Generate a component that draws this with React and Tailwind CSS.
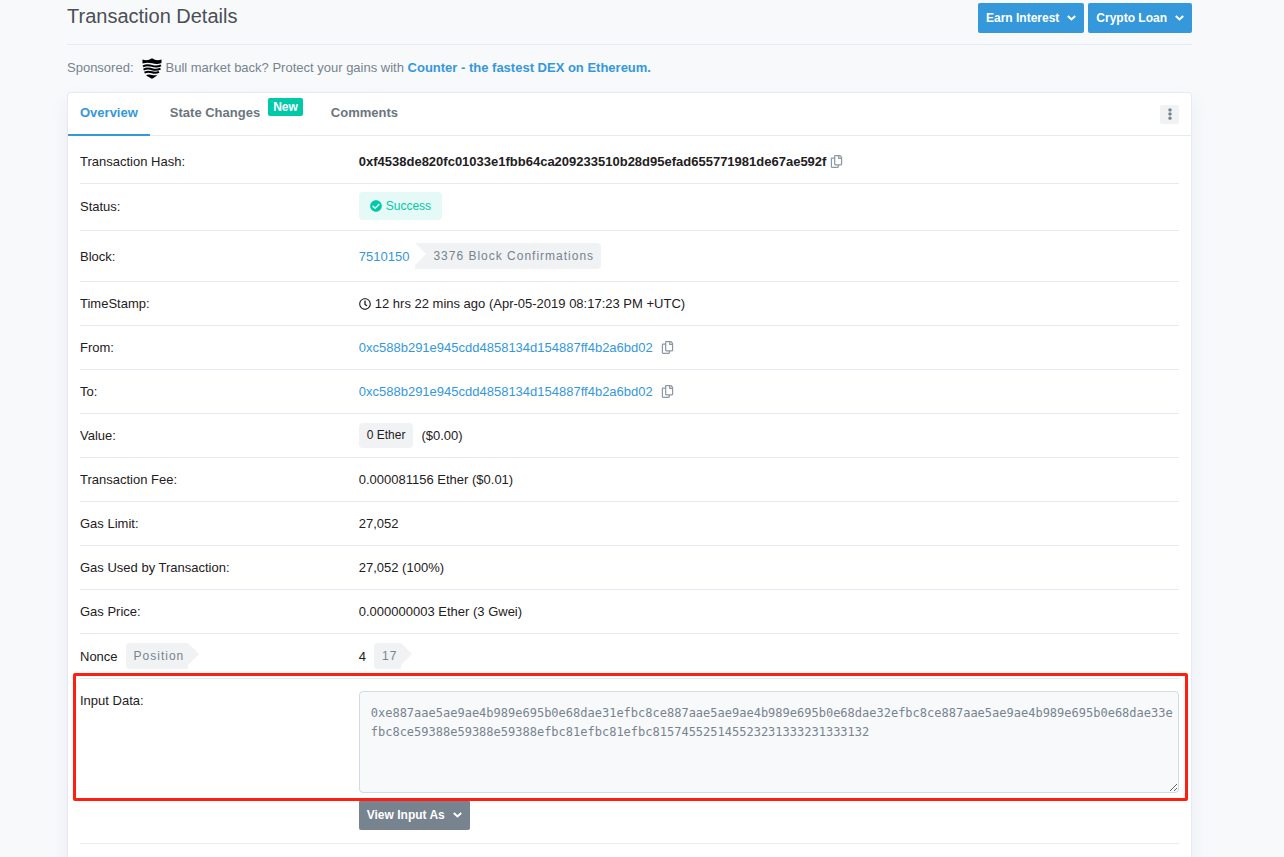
import { FaCheckCircle, FaEllipsisV, FaRegClock, FaRegCopy } from 'react-icons/fa'

const HASH = '0xf4538de820fc01033e1fbb64ca209233510b28d95efad655771981de67ae592f'
const ADDRESS = '0xc588b291e945cdd4858134d154887ff4b2a6bd02'
const INPUT_DATA =
  '0xe887aae5ae9ae4b989e695b0e68dae31efbc8ce887aae5ae9ae4b989e695b0e68dae32efbc8ce887aae5ae9ae4b989e695b0e68dae33efbc8ce59388e59388e59388efbc81efbc81efbc815745525145523231333231333132'

function CounterLogo() {
  return (
    <svg width="20" height="21" viewBox="0 0 20 21" aria-hidden="true">
      <path d="M.5 1.500C4 2.800 7 2.200 10 .3c3 1.900 6 2.500 9.500 1.200V5c-3 1.300-6 1.300-9.500.3C7 4.500 4 4.500.5 5.500z" />
      <path
        d="M1 8.300C4.500 6.700 7 7 10 7.900s6 .9 9-.6M1.500 11.600C5 10 7 10.300 10 11.200s5.500.9 8.500-.6M2.500 14.600c3-1.200 5-1 7.500-.3s4.500.8 7-.4"
        fill="none"
        stroke="#000"
        strokeWidth="2"
      />
      <path d="M4 17c2.500-.9 4-.6 6-.1s3.500.5 5.500-.2C14 18.500 12 19.800 10 20.800 8 19.800 5.500 18.600 4 17z" />
    </svg>
  )
}

function MenuButton({ children, className }) {
  return (
    <button
      type="button"
      className={`flex h-[30px] items-center gap-2 rounded-xs px-2 text-xs font-bold text-white ${className}`}
    >
      {children}
      <svg width="9" height="6" viewBox="0 0 9 6" fill="none" stroke="currentColor" strokeWidth="2" aria-hidden="true">
        <path d="M.8.9 4.500 4.400 8.200.9" />
      </svg>
    </button>
  )
}

function CopyButton() {
  return (
    <button type="button" aria-label="Copy" className="text-[#8c98a4]">
      <FaRegCopy size={13} />
    </button>
  )
}

function Row({ label, padding = 'py-3', children }) {
  return (
    <div className={`grid grid-cols-4 items-center gap-x-4 border-b border-[#e7eaf3] ${padding}`}>
      <dt className="flex items-center gap-2">{label}</dt>
      <dd className="col-span-3 flex items-center">{children}</dd>
    </div>
  )
}

// Grey label with an arrow point on its right edge
function ArrowLabel({ children }) {
  return (
    <span className="flex h-[26px]">
      <span className="rounded-l-sm bg-[#f1f2f4] pl-2 pr-1 text-xs leading-[26px] tracking-[1px] text-[#77838f]">
        {children}
      </span>
      <svg width="11" height="26" viewBox="0 0 11 26" aria-hidden="true">
        <path d="M0 0 11 11 0 22z" fill="#f1f2f4" />
      </svg>
    </span>
  )
}

export default function App() {
  return (
    <main className="min-h-screen overflow-hidden bg-[#f8f9fb] pl-[67px] pr-[92px] font-['Liberation_Sans',Arial,sans-serif] text-[13px] leading-[19px] text-[#1e2022]">
      <header className="flex items-center justify-between border-b border-[#e7eaf3] pb-[11px] pt-[3px]">
        <h1 className="-mt-1 text-xl text-[#4a4f55]">Transaction Details</h1>
        <div className="flex gap-1">
          <MenuButton className="bg-[#3498db]">Earn Interest</MenuButton>
          <MenuButton className="bg-[#3498db]">Crypto Loan</MenuButton>
        </div>
      </header>

      <p className="flex items-center pb-[13px] pt-[11px] leading-[23px] text-[#77838f]">
        Sponsored:
        <span className="ml-2 mr-1 pt-[2px]">
          <CounterLogo />
        </span>
        <span>
          Bull market back? Protect your gains with{' '}
          <a href="#counter" className="font-bold text-[#3498db]">
            Counter - the fastest DEX on Ethereum.
          </a>
        </span>
      </p>

      <section className="rounded-t border border-b-0 border-[#e7eaf3] bg-white pb-8 shadow-[0_8px_19px_rgba(189,197,209,0.2)]">
        <div className="flex items-center justify-between border-b border-[#e7eaf3] pr-3">
          <nav className="flex font-bold text-[#6c757e]">
            <a href="#overview" className="-mb-px border-b-2 border-[#3498db] px-3 pb-3 pt-[10px] text-[#3498db]">
              Overview
            </a>
            <a href="#state" className="ml-2 flex items-start gap-2 px-3 pt-[10px]">
              State Changes
              <span className="-mt-[5px] rounded-xs bg-[#00c9a7] px-[5px] text-xs leading-[18px] text-white">New</span>
            </a>
            <a href="#comments" className="ml-1 px-3 pt-[10px]">
              Comments
            </a>
          </nav>
          <button
            type="button"
            aria-label="More options"
            className="flex h-[19px] w-[19px] items-center justify-center rounded-xs bg-[#f1f2f4] text-[#77838f]"
          >
            <FaEllipsisV size={12} />
          </button>
        </div>

        <dl className="px-3 pt-1">
          <Row label="Transaction Hash:">
            <span className="mr-1 font-bold">{HASH}</span>
            <CopyButton />
          </Row>
          <Row label="Status:" padding="pb-[10px] pt-2">
            <span className="flex h-7 items-center gap-1 rounded bg-[#e5f9f6] px-[11px] text-xs text-[#00c9a7]">
              <FaCheckCircle size={12} />
              Success
            </span>
          </Row>
          <Row label="Block:">
            <a href="#block" className="mr-[6px] text-[#3498db]">7510150</a>
            <svg width="11" height="26" viewBox="0 0 11 26" aria-hidden="true">
              <path d="M0 0H11V26H0V22L11 11z" fill="#f1f2f4" />
            </svg>
            <span className="h-[26px] rounded-r-sm bg-[#f1f2f4] px-[7px] text-xs leading-[26px] tracking-[1px] text-[#77838f]">
              3376 Block Confirmations
            </span>
          </Row>
          <Row label="TimeStamp:">
            <FaRegClock size={12} className="mr-1" />
            12 hrs 22 mins ago (Apr-05-2019 08:17:23 PM +UTC)
          </Row>
          <Row label="From:">
            <a href="#from" className="mr-2 text-[#3498db]">{ADDRESS}</a>
            <CopyButton />
          </Row>
          <Row label="To:">
            <a href="#to" className="mr-2 text-[#3498db]">{ADDRESS}</a>
            <CopyButton />
          </Row>
          <Row label="Value:" padding="py-[9px]">
            <span className="mr-2 h-[25px] rounded bg-[#f1f2f4] px-2 text-xs leading-[25px]">0 Ether</span>
            ($0.00)
          </Row>
          <Row label="Transaction Fee:">0.000081156 Ether ($0.01)</Row>
          <Row label="Gas Limit:">27,052</Row>
          <Row label="Gas Used by Transaction:">27,052 (100%)</Row>
          <Row label="Gas Price:">0.000000003 Ether (3 Gwei)</Row>
          <Row label={<>Nonce <ArrowLabel>Position</ArrowLabel></>} padding="py-[9px]">
            <span className="mr-2">4</span>
            <ArrowLabel>17</ArrowLabel>
          </Row>

          <div className="relative grid grid-cols-4 gap-x-4 border-b border-[#e7eaf3] pb-[13px] pt-3">
            <dt>
              <label htmlFor="input-data">Input Data:</label>
            </dt>
            <dd className="col-span-3">
              <textarea
                id="input-data"
                readOnly
                spellCheck={false}
                value={INPUT_DATA}
                className="block h-[102px] w-full resize rounded border border-[#d5dae2] bg-[#f8f9fb] py-3 pl-[11px] pr-1 font-['DejaVu_Sans_Mono',monospace] text-xs leading-[19px] text-[#77838f]"
              />
              <MenuButton className="mt-[7px] bg-[#77838f]">View Input As</MenuButton>
            </dd>
            <div className="pointer-events-none absolute -left-[7px] -right-[9px] -top-[6px] h-[128px] rounded-xs border-3 border-[#ff1e10]" />
          </div>
        </dl>
      </section>
    </main>
  )
}
